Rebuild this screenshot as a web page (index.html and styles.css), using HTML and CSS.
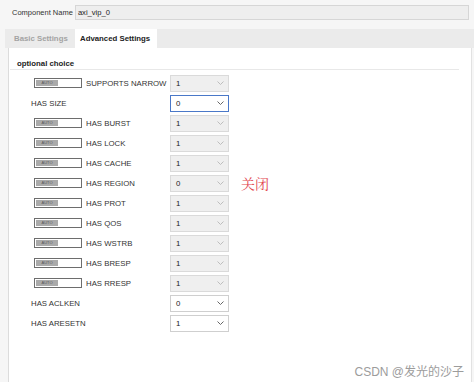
FILE: index.html
```html
<!DOCTYPE html>
<html lang="en">
<head>
    <meta charset="UTF-8">
    <meta name="viewport" content="width=device-width, initial-scale=1.0">
    <title>AXI VIP - Advanced Settings</title>
    <link rel="stylesheet" href="styles.css">
</head>
<body>
    <div class="page">
        <div class="name-row">
            <span class="name-label">Component Name</span>
            <div class="name-input">axi_vip_0</div>
        </div>

        <div class="tabs">
            <div class="tab">Basic Settings</div>
            <div class="tab active">Advanced Settings</div>
        </div>

        <div class="panel">
            <div class="group-title">optional choice</div>
            <div class="rows">
                <div class="row">
                    <div class="param"><span class="auto"><span class="auto-tag">AUTO</span></span><span class="param-name">SUPPORTS NARROW</span></div>
                    <div class="combo"><span>1</span><svg width="7" height="4" viewBox="0 0 7 4"><polyline points="0.5,0.5 3.5,3.5 6.5,0.5"/></svg></div>
                </div>
                <div class="row">
                    <div class="param plain"><span class="param-name">HAS SIZE</span></div>
                    <div class="combo on focus"><span>0</span><svg width="7" height="4" viewBox="0 0 7 4"><polyline points="0.5,0.5 3.5,3.5 6.5,0.5"/></svg></div>
                </div>
                <div class="row">
                    <div class="param"><span class="auto"><span class="auto-tag">AUTO</span></span><span class="param-name">HAS BURST</span></div>
                    <div class="combo"><span>1</span><svg width="7" height="4" viewBox="0 0 7 4"><polyline points="0.5,0.5 3.5,3.5 6.5,0.5"/></svg></div>
                </div>
                <div class="row">
                    <div class="param"><span class="auto"><span class="auto-tag">AUTO</span></span><span class="param-name">HAS LOCK</span></div>
                    <div class="combo"><span>1</span><svg width="7" height="4" viewBox="0 0 7 4"><polyline points="0.5,0.5 3.5,3.5 6.5,0.5"/></svg></div>
                </div>
                <div class="row">
                    <div class="param"><span class="auto"><span class="auto-tag">AUTO</span></span><span class="param-name">HAS CACHE</span></div>
                    <div class="combo"><span>1</span><svg width="7" height="4" viewBox="0 0 7 4"><polyline points="0.5,0.5 3.5,3.5 6.5,0.5"/></svg></div>
                </div>
                <div class="row">
                    <div class="param"><span class="auto"><span class="auto-tag">AUTO</span></span><span class="param-name">HAS REGION</span></div>
                    <div class="combo"><span>0</span><svg width="7" height="4" viewBox="0 0 7 4"><polyline points="0.5,0.5 3.5,3.5 6.5,0.5"/></svg></div>
                    <span class="note">关闭</span>
                </div>
                <div class="row">
                    <div class="param"><span class="auto"><span class="auto-tag">AUTO</span></span><span class="param-name">HAS PROT</span></div>
                    <div class="combo"><span>1</span><svg width="7" height="4" viewBox="0 0 7 4"><polyline points="0.5,0.5 3.5,3.5 6.5,0.5"/></svg></div>
                </div>
                <div class="row">
                    <div class="param"><span class="auto"><span class="auto-tag">AUTO</span></span><span class="param-name">HAS QOS</span></div>
                    <div class="combo"><span>1</span><svg width="7" height="4" viewBox="0 0 7 4"><polyline points="0.5,0.5 3.5,3.5 6.5,0.5"/></svg></div>
                </div>
                <div class="row">
                    <div class="param"><span class="auto"><span class="auto-tag">AUTO</span></span><span class="param-name">HAS WSTRB</span></div>
                    <div class="combo"><span>1</span><svg width="7" height="4" viewBox="0 0 7 4"><polyline points="0.5,0.5 3.5,3.5 6.5,0.5"/></svg></div>
                </div>
                <div class="row">
                    <div class="param"><span class="auto"><span class="auto-tag">AUTO</span></span><span class="param-name">HAS BRESP</span></div>
                    <div class="combo"><span>1</span><svg width="7" height="4" viewBox="0 0 7 4"><polyline points="0.5,0.5 3.5,3.5 6.5,0.5"/></svg></div>
                </div>
                <div class="row">
                    <div class="param"><span class="auto"><span class="auto-tag">AUTO</span></span><span class="param-name">HAS RRESP</span></div>
                    <div class="combo"><span>1</span><svg width="7" height="4" viewBox="0 0 7 4"><polyline points="0.5,0.5 3.5,3.5 6.5,0.5"/></svg></div>
                </div>
                <div class="row">
                    <div class="param plain"><span class="param-name">HAS ACLKEN</span></div>
                    <div class="combo on"><span>0</span><svg width="7" height="4" viewBox="0 0 7 4"><polyline points="0.5,0.5 3.5,3.5 6.5,0.5"/></svg></div>
                </div>
                <div class="row">
                    <div class="param plain"><span class="param-name">HAS ARESETN</span></div>
                    <div class="combo on"><span>1</span><svg width="7" height="4" viewBox="0 0 7 4"><polyline points="0.5,0.5 3.5,3.5 6.5,0.5"/></svg></div>
                </div>
            </div>
        </div>

        <div class="watermark">CSDN @发光的沙子</div>
    </div>
</body>
</html>
```

FILE: styles.css
```css
html, body {
    margin: 0;
    padding: 0;
    height: 100%;
}
body {
    font-family: 'Liberation Sans', Arial, sans-serif;
    font-size: 7.8px;
    color: #222;
    background-color: #f6f6f6;
}
.page {
    position: relative;
    display: flex;
    flex-direction: column;
    height: 100%;
    overflow: hidden;
}

/* component name */
.name-row {
    display: flex;
    align-items: center;
    gap: 2px;
    padding: 5px 5px 0 12px;
}
.name-label {
    font-size: 7.5px;
    color: #333;
}
.name-input {
    flex: 1;
    box-sizing: border-box;
    height: 15px;
    padding-left: 2px;
    line-height: 13px;
    font-size: 7.6px;
    background-color: #eeeeee;
    border: 1px solid #d6d6d6;
}

/* tabs */
.tabs {
    display: flex;
    height: 19px;
    margin: 9px 0 0 5px;
    background-color: #ebebeb;
}
.tab {
    box-sizing: border-box;
    width: 70px;
    padding-left: 9px;
    line-height: 19px;
    font-weight: bold;
    color: #a3a3a3;
}
.tab.active {
    width: 82px;
    padding-left: 5px;
    color: #222;
    background-color: #fff;
}

/* panel */
.panel {
    flex: 1;
    margin: 0 2px 0 8px;
    background-color: #fff;
    border-left: 1px solid #dcdcdc;
    border-right: 1px solid #e2e2e2;
}
.group-title {
    margin: 0 12px 0 1px;
    padding: 10px 0 0 7px;
    line-height: 11px;
    font-weight: bold;
    color: #222;
    border-bottom: 1px solid #e8e8e8;
}
.rows {
    display: flex;
    flex-direction: column;
    margin-top: 3px;
}
.row {
    display: grid;
    grid-template-columns: 161px 59px auto;
    align-items: center;
    height: 20px;
}
.param {
    display: flex;
    align-items: center;
}
.param-name {
    color: #333;
}
.plain .param-name {
    margin-left: 22px;
}

/* auto toggle */
.auto {
    display: flex;
    box-sizing: border-box;
    width: 48px;
    height: 10px;
    margin: 0 4px 0 25px;
    padding: 1px;
    background-color: #fff;
    border: 1px solid #6d6d6d;
}
.auto-tag {
    width: 22px;
    font-size: 4px;
    line-height: 6px;
    text-align: center;
    color: #555;
    background-color: #aaaaaa;
}

/* combo box */
.combo {
    display: flex;
    align-items: center;
    justify-content: space-between;
    box-sizing: border-box;
    height: 17px;
    padding: 0 4px 0 5px;
    background-color: #efefef;
    border: 1px solid #dadada;
}
.combo svg {
    fill: none;
    stroke: #bdbdbd;
    stroke-width: 1;
}
.combo.on {
    background-color: #fff;
    border-color: #cfcfcf;
}
.combo.on svg {
    stroke: #666;
}
.combo.focus {
    border-color: #4a78c8;
}
.note {
    margin-left: 12px;
    font-family: 'Noto Serif CJK SC', 'Noto Sans CJK SC', serif;
    font-size: 14px;
    color: #e2474f;
}

.watermark {
    position: absolute;
    right: 10px;
    bottom: 3px;
    font-family: 'Liberation Sans', 'Noto Sans CJK SC', sans-serif;
    font-size: 12px;
    color: #9c9c9c;
}
```
